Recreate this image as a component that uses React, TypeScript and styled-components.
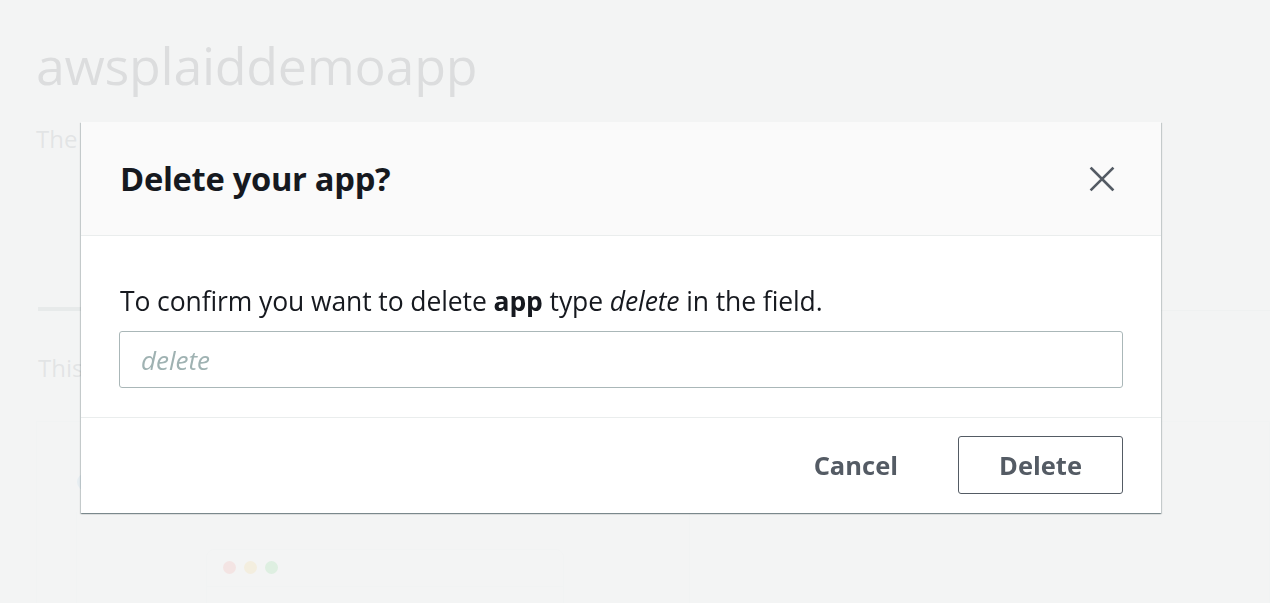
import React from "react";
import styled, { createGlobalStyle } from "styled-components";

const GlobalStyle = createGlobalStyle`
  html, body { margin: 0; padding: 0; }
  body {
    background: #ffffff;
    font-family: "Open Sans", "Noto Sans", "Liberation Sans", sans-serif;
    color: #16191f;
    width: 1270px;
    height: 603px;
    overflow: hidden;
  }
`;

const Page = styled.div`
  padding: 32px 0 0 36px;
  height: 603px;
  box-sizing: border-box;
  overflow: hidden;
`;

const AppTitle = styled.h1`
  margin: 0;
  font-size: 52px;
  font-weight: 400;
  line-height: 66px;
  color: #16191f;
  letter-spacing: -0.3px;
`;

const Lead = styled.p`
  margin: 26px 0 0;
  font-size: 24px;
  line-height: 30px;
  color: #545b64;
`;

const Tabs = styled.div`
  margin-top: 112px;
  display: flex;
  border-bottom: 1px solid #d5dbdb;
  margin-left: 2px;
`;

const Tab = styled.div<{ $active?: boolean }>`
  padding: 8px 48px 6px;
  font-size: 20px;
  font-weight: 700;
  color: ${(p) => (p.$active ? "#16191f" : "#545b64")};
  border-bottom: 4px solid ${(p) => (p.$active ? "#879596" : "transparent")};
  margin-bottom: -1px;
`;

const Info = styled.p`
  margin: 42px 0 0 2px;
  font-size: 24px;
  line-height: 30px;
  color: #545b64;
`;

const Card = styled.div`
  margin-top: 38px;
  border: 1px solid #eaeded;
  background: #ffffff;
  height: 300px;
  display: flex;
  flex-direction: column;
  overflow: hidden;
`;

const CardHead = styled.div`
  display: flex;
  align-items: center;
  flex-shrink: 0;
  padding: 0 0 0 40px;
  height: 90px;
`;

const StepDot = styled.div`
  width: 18px;
  height: 18px;
  border-radius: 50%;
  background: #0073bb;
  opacity: 0.5;
  margin-top: 30px;
`;

const Preview = styled.div`
  margin: 0 0 0 39px;
  width: 614px;
  flex: 1 0 auto;
  border-left: 1px solid #eaeded;
  border-right: 1px solid #eaeded;
  background: #ffffff;
  padding: 37px 0 0 129px;
  box-sizing: border-box;
`;

const Window = styled.div`
  width: 356px;
  height: 160px;
  border: 1px solid #eaeded;
  border-radius: 8px;
  background: #fff;
`;

const WindowBar = styled.div`
  display: flex;
  gap: 8px;
  padding: 11px 16px 12px;
  border-bottom: 1px solid #eaeded;
`;

const Light = styled.span<{ $c: string }>`
  width: 13px;
  height: 13px;
  border-radius: 50%;
  background: ${(p) => p.$c};
`;

const Overlay = styled.div`
  position: fixed;
  inset: 0;
  background: rgba(242, 243, 243, 0.9);
  display: flex;
  align-items: flex-start;
  justify-content: flex-start;
  padding: 122px 0 0 81px;
`;

const Modal = styled.div`
  width: 1080px;
  background: #ffffff;
  box-shadow: 0 1px 1px 0 rgba(0, 28, 36, 0.3),
    1px 1px 1px 0 rgba(0, 28, 36, 0.15),
    -1px 1px 1px 0 rgba(0, 28, 36, 0.15);
  display: flex;
  flex-direction: column;
`;

const ModalHeader = styled.div`
  height: 114px;
  box-sizing: border-box;
  background: #fafafa;
  border-bottom: 1px solid #eaeded;
  display: flex;
  align-items: center;
  justify-content: space-between;
  padding: 0 44px 0 39px;
`;

const ModalTitle = styled.h2`
  margin: 0;
  font-size: 32.7px;
  font-weight: 700;
  line-height: 40px;
  color: #16191f;
  letter-spacing: -0.3px;
`;

const CloseButton = styled.button`
  border: none;
  background: transparent;
  padding: 2px;
  display: flex;
  align-items: center;
  justify-content: center;
  color: #545b64;
  cursor: pointer;
`;

const ModalBody = styled.div`
  padding: 50px 38px 29px;
  border-bottom: 1px solid #eaeded;
  display: flex;
  flex-direction: column;
`;

const Prompt = styled.p`
  margin: 0 0 15px 1px;
  font-size: 26.5px;
  line-height: 30px;
  color: #16191f;
  letter-spacing: -0.1px;
`;

const Field = styled.input`
  height: 57px;
  box-sizing: border-box;
  border: 1px solid #aab7b8;
  border-radius: 3px;
  padding: 0 21px;
  font-family: inherit;
  font-size: 26px;
  color: #16191f;
  outline: none;
  &::placeholder {
    color: #9fb2b2;
    font-style: italic;
  }
`;

const ModalFooter = styled.div`
  display: flex;
  justify-content: flex-end;
  align-items: center;
  gap: 39px;
  padding: 18px 38px 19px;
`;

const Button = styled.button<{ $outlined?: boolean }>`
  height: 58px;
  box-sizing: border-box;
  font-family: inherit;
  font-size: 25.5px;
  font-weight: 700;
  color: #545b64;
  background: #ffffff;
  border: ${(p) => (p.$outlined ? "1px solid #545b64" : "1px solid transparent")};
  border-radius: 3px;
  padding: ${(p) => (p.$outlined ? "0 38px" : "0 20px")};
  min-width: ${(p) => (p.$outlined ? "165px" : "0")};
  cursor: pointer;
`;

const CloseIcon = () => (
  <svg width="26" height="26" viewBox="0 0 26 26" fill="none">
    <path d="M2.5 2.5 L23.5 23.5 M23.5 2.5 L2.5 23.5" stroke="currentColor" strokeWidth="2.6" strokeLinecap="square" />
  </svg>
);

export default function App() {
  return (
    <>
      <GlobalStyle />
      <Page>
        <AppTitle>awsplaiddemoapp</AppTitle>
        <Lead>The app homepage lists all deployed frontend and backend environments.</Lead>
        <Tabs>
          <Tab $active>Frontend environments</Tab>
          <Tab>Backend environments</Tab>
        </Tabs>
        <Info>This tab lists all connected branches, select a branch to view build details.</Info>
        <Card>
          <CardHead>
            <StepDot />
          </CardHead>
          <Preview>
            <Window>
              <WindowBar>
                <Light $c="#ff5f57" />
                <Light $c="#febc2e" />
                <Light $c="#28c840" />
              </WindowBar>
            </Window>
          </Preview>
        </Card>
      </Page>
      <Overlay>
        <Modal role="dialog" aria-modal="true">
          <ModalHeader>
            <ModalTitle>Delete your app?</ModalTitle>
            <CloseButton aria-label="Close">
              <CloseIcon />
            </CloseButton>
          </ModalHeader>
          <ModalBody>
            <Prompt>
              To confirm you want to delete <b>app</b> type <i>delete</i> in the field.
            </Prompt>
            <Field placeholder="delete" />
          </ModalBody>
          <ModalFooter>
            <Button>Cancel</Button>
            <Button $outlined>Delete</Button>
          </ModalFooter>
        </Modal>
      </Overlay>
    </>
  );
}
